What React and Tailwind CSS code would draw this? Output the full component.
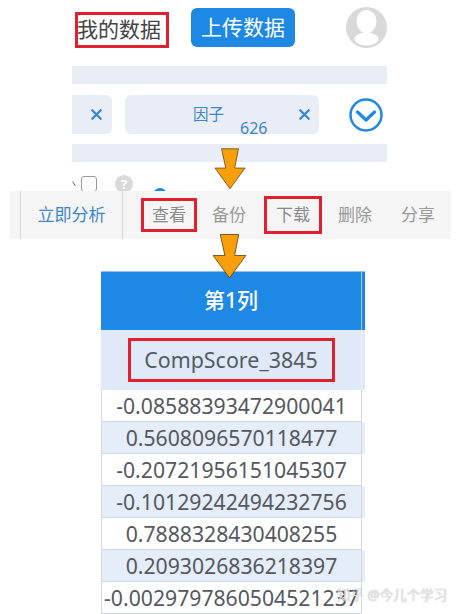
import { X } from 'lucide-react'

const CJK = "font-['Noto_Sans','Noto_Sans_CJK_SC',sans-serif]"

const rows = [
  '-0.08588393472900041',
  '0.5608096570118477',
  '-0.20721956151045307',
  '-0.10129242494232756',
  '0.7888328430408255',
  '0.2093026836218397',
  '-0.0029797860504521237',
  '',
]

function Arrow({ className }) {
  return (
    <svg className={`absolute ${className}`} viewBox="0 0 34 44">
      <path d="M8 0.5 H26 L22 21 H33 L17 43 L1 21 H12.5 Z" fill="#f79f0b" stroke="#5b4210" strokeWidth="0.8" />
    </svg>
  )
}

function Avatar() {
  return (
    <svg width="41" height="41" viewBox="0 0 41 41">
      <circle cx="20.5" cy="20.5" r="20.5" fill="#d9d9d9" />
      <ellipse cx="20.5" cy="14.5" rx="10" ry="11.5" fill="#fff" />
      <ellipse cx="20.5" cy="32" rx="12" ry="6.5" fill="#fff" />
    </svg>
  )
}

function Toolbar() {
  return (
    <div className={`mx-[10px] h-[48px] bg-[#f5f5f5] flex items-center text-[17px] ${CJK}`}>
      <div className="ml-[10px] w-[103px] h-full border-x border-[#d5d5d5] flex items-center justify-center text-[#3d85cc]">
        立即分析
      </div>
      <div className="ml-[18px] w-[56px] h-[34px] border-[3px] border-[#e0202f] flex items-center justify-center text-[#8a8a8a]">
        查看
      </div>
      <span className="ml-[15px] text-[#999]">备份</span>
      <div className="ml-[18px] w-[58px] h-[38px] border-[3px] border-[#e0202f] flex items-center justify-center text-[#8a8a8a]">
        下载
      </div>
      <span className="ml-[16px] text-[#999]">删除</span>
      <span className="ml-[29px] text-[#999]">分享</span>
    </div>
  )
}

export default function App() {
  return (
    <div className={`relative w-[461px] h-[614px] overflow-hidden bg-white ${CJK}`}>
      {/* top panel */}
      <div className="ml-[72px] w-[315px] h-[191px]">
        <div className="pt-[7px] h-[66px] flex items-start">
          <div className="ml-[3px] mt-[5px] w-[94px] h-[36px] border-[3px] border-[#e0202f] flex items-center text-[21px] text-[#444] whitespace-nowrap">
            <span className="-ml-px">我的数据</span>
          </div>
          <div className="ml-[22px] mt-[1px] w-[104px] h-[39px] rounded-[6px] bg-[#1e88e5] text-white text-[21px] flex items-center justify-center">
            上传数据
          </div>
          <div className="ml-auto">
            <Avatar />
          </div>
        </div>
        <div className="h-[18px] bg-[#e9edf5]" />
        <div className="mt-[11px] h-[39px] flex items-center">
          <div className="w-[40px] h-full bg-[#e9edf5] rounded-r-[6px] flex items-center justify-end pr-[7px]">
            <X size={17} strokeWidth={3} className="text-[#2f86d6]" />
          </div>
          <div className="relative ml-[13px] w-[194px] h-full bg-[#e9edf5] rounded-[6px] flex items-center text-[#3d85cc] text-[15.5px]">
            <span className="ml-[68px]">因子</span>
            <span className="absolute left-[115px] top-[23px] text-[16px] leading-[20px]">626</span>
            <X size={17} strokeWidth={3} className="absolute right-[6px] text-[#2f86d6]" />
          </div>
          <svg className="ml-[30px]" width="34" height="34" viewBox="0 0 34 34" fill="none" stroke="#1e88e5">
            <circle cx="17" cy="17" r="15.5" strokeWidth="2.5" />
            <path d="M8.5 14 L17 22 L25.5 14" strokeWidth="3.2" strokeLinecap="round" strokeLinejoin="round" />
          </svg>
        </div>
        <div className="mt-[10px] h-[18px] bg-[#e9edf5]" />
        <div className="h-[29px] flex items-start">
          <svg className="mt-[19px]" width="4" height="6" viewBox="0 0 4 6">
            <path d="M0.5 0.5 L3.5 5" stroke="#666" strokeWidth="1" />
          </svg>
          <div className="ml-[5px] mt-[14px] w-[16px] h-[16px] rounded-[3px] border border-[#999] bg-white" />
          <div className="ml-[18px] mt-[13px] w-[18px] h-[18px] rounded-full bg-[#d9d9d9] text-white text-[13px] font-bold leading-[18px] text-center">
            ?
          </div>
          <div className="ml-[20px] mt-[26px] w-[14px] h-[14px] rounded-full bg-[#1e88e5]" />
        </div>
      </div>

      <div className="relative">
        <Toolbar />
      </div>

      {/* data table */}
      <div className="ml-[101px] mt-[32px] w-[264px]">
        <div className="h-[59px] bg-[#1e88e5] flex border-t border-[#8fc1ee]">
          <div className="w-[261px] border-r border-[#a8cff2] flex items-center justify-center text-white text-[21px] font-medium">
            第1列
          </div>
        </div>
        <div className="h-[60px] bg-[#dfe9f7] flex">
          <div className="w-[261px] border-r border-[#eef2f8] flex items-center justify-center">
            <div className="w-[207px] h-[44px] border-[3px] border-[#e0202f] flex items-center justify-center text-[21.4px] text-[#555b66] font-['Noto_Sans',sans-serif]">
              CompScore_3845
            </div>
          </div>
        </div>
        {rows.map((value, i) => (
          <div key={i} className={`h-[32px] flex ${i % 2 ? 'bg-[#e4edf8]' : 'bg-white'}`}>
            <div className="w-[261px] border-x border-b border-[#d3d8de] flex items-center justify-center whitespace-nowrap text-[21.2px] text-[#55585e] font-['Noto_Sans',sans-serif]">
              {value}
            </div>
          </div>
        ))}
      </div>

      <Arrow className="left-[214px] top-[148px] w-[32px] h-[42px]" />
      <Arrow className="left-[212px] top-[234px] w-[35px] h-[45px]" />

      {/* watermark */}
      <div className="absolute left-[337px] top-[585px] text-[13.5px] leading-[20px] text-white/70 whitespace-nowrap [text-shadow:0_0_1px_#999]">
        知乎 @今儿个学习
      </div>
    </div>
  )
}
